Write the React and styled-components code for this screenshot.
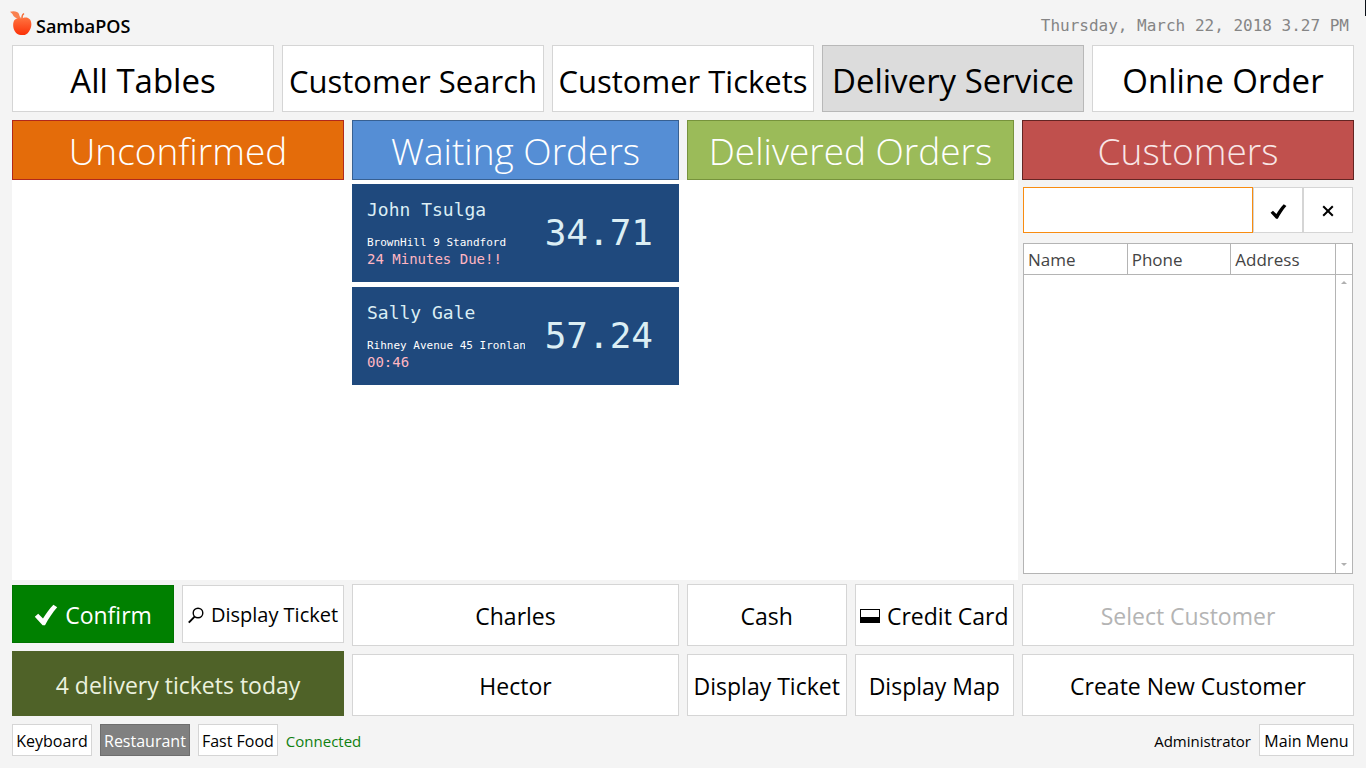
import React from "react";
import styled, { createGlobalStyle } from "styled-components";

const UI = `"Open Sans", "Noto Sans", sans-serif`;
const MONO = `"DejaVu Sans Mono", "Liberation Mono", monospace`;
const COLUMNS = "minmax(0, 332fr) minmax(0, 327fr) minmax(0, 327fr) minmax(0, 332fr)";

const GlobalStyle = createGlobalStyle`
  *, *::before, *::after { box-sizing: border-box; }
  body { margin: 0; background: #f4f4f4; color: #000; font-family: ${UI}; }
  button, input { font: inherit; color: inherit; margin: 0; border-radius: 0; }
`;

const Page = styled.div`
  min-height: 100vh;
  display: flex;
  flex-direction: column;
  padding: 0 12px 12px;
  position: relative;
`;

const WindowEdge = styled.span`
  position: absolute;
  top: 0;
  right: 0;
  width: 1px;
  height: 16px;
  background: #0b1118;
`;

const TopBar = styled.header`
  display: flex;
  align-items: center;
  justify-content: space-between;
  height: 45px;
  padding: 6px 5px 0 0;
`;

const Brand = styled.div`
  display: flex;
  align-items: center;
  gap: 4px;
  margin-left: -2px;
  font-size: 18px;
  font-weight: 600;
  line-height: 24px;
  svg { margin-top: -4px; }
`;

const Clock = styled.time`
  font: 16px/24px ${MONO};
  color: #858585;
`;

const Button = styled.button`
  display: flex;
  align-items: center;
  justify-content: center;
  gap: 7px;
  min-width: 0;
  padding: 2px 0 0;
  border: 1px solid ${(p) => p.$border || "#d5d5d5"};
  background: ${(p) => p.$bg || "#fff"};
  color: ${(p) => p.$color || "#000"};
  font-size: ${(p) => p.$size || 23}px;
  line-height: 32px;
  white-space: nowrap;
`;

const Tabs = styled.nav`
  display: grid;
  grid-template-columns: repeat(5, minmax(0, 1fr));
  gap: 8px;
`;

const Tab = styled(Button)`
  height: 67px;
  padding-top: 4px;
`;

const Headings = styled.div`
  display: grid;
  grid-template-columns: ${COLUMNS};
  gap: 8px;
  margin-top: 8px;
`;

const Heading = styled.h2`
  margin: 0;
  height: 60px;
  border: 1px solid ${(p) => p.$border};
  background: ${(p) => p.$bg};
  color: ${(p) => p.$color || "#fff"};
  font-size: 37px;
  font-weight: 300;
  line-height: 60px;
  text-align: center;
  white-space: nowrap;
`;

const Workspace = styled.main`
  flex: 1;
  display: grid;
  grid-template-columns: ${COLUMNS};
  column-gap: 8px;
`;

const Board = styled.section`
  grid-column: 1 / 4;
  display: grid;
  grid-template-columns: subgrid;
  margin: 0 -4px 4px 0;
  padding-right: 4px;
  background: #fff;
`;

const Lane = styled.div`
  display: flex;
  flex-direction: column;
  gap: 5px;
  padding-top: 4px;
`;

const Ticket = styled.article`
  display: grid;
  grid-template-columns: minmax(0, 1fr) auto;
  align-items: center;
  column-gap: 20px;
  height: 98px;
  padding: 0 26px 0 15px;
  background: #1f497d;
  color: #dbeef4;
  font-family: ${MONO};
`;

const TicketInfo = styled.div`
  min-width: 0;
  display: flex;
  flex-direction: column;
`;

const Customer = styled.span`
  margin-bottom: 14px;
  font-size: 18px;
  line-height: 22px;
`;

const Address = styled.span`
  overflow: hidden;
  white-space: nowrap;
  color: #fff;
  font-size: 11px;
  line-height: 16px;
`;

const Due = styled.span`
  color: #ffb6c1;
  font-size: 14px;
  line-height: 16px;
`;

const Amount = styled.span`
  font-size: 36px;
  line-height: 44px;
`;

const CustomerPanel = styled.section`
  display: flex;
  flex-direction: column;
  gap: 10px;
  padding: 7px 1px 10px;
`;

const SearchRow = styled.form`
  display: flex;
  height: 46px;
`;

const SearchInput = styled.input`
  flex: 1;
  min-width: 0;
  padding: 0 8px;
  border: 1px solid #f88c10;
  background: #fff;
  font-size: 23px;
  outline: none;
`;

const SearchButton = styled(Button)`
  width: 50px;
`;

const ListBox = styled.div`
  flex: 1;
  display: grid;
  grid-template-columns: minmax(0, 1fr) 17px;
  border: 1px solid #b4b4b4;
  background: #fff;
`;

const CustomerTable = styled.table`
  width: 100%;
  align-self: start;
  border-collapse: separate;
  border-spacing: 0;
  table-layout: fixed;
  th {
    height: 31px;
    padding: 2px 4px 0;
    border-right: 1px solid #b4b4b4;
    border-bottom: 1px solid #b4b4b4;
    color: #444;
    font-size: 17px;
    font-weight: 400;
    line-height: 24px;
    text-align: left;
  }
  th:last-child { border-right: 0; }
`;

const ScrollBar = styled.div`
  display: flex;
  flex-direction: column;
  justify-content: space-between;
  align-items: center;
  padding-bottom: 6px;
  border-left: 1px solid #b4b4b4;
`;

const ScrollHead = styled.div`
  display: flex;
  flex-direction: column;
  align-items: center;
  align-self: stretch;
  gap: 6px;
  &::before {
    content: "";
    align-self: stretch;
    height: 31px;
    border-bottom: 1px solid #b4b4b4;
  }
`;

const Actions = styled.section`
  display: grid;
  grid-template-columns: ${COLUMNS};
  column-gap: 8px;
`;

const ActionGroup = styled.div`
  display: grid;
  grid-template-columns: repeat(${(p) => p.$cols || 1}, minmax(0, 1fr));
  grid-template-rows: 62px 62px;
  gap: 8px;
`;

const TicketActions = styled(ActionGroup)`
  grid-template-rows: 58px 65px;
  padding-top: 1px;
`;

const Summary = styled(Button)`
  grid-column: 1 / -1;
`;

const StatusBar = styled.footer`
  display: flex;
  align-items: center;
  gap: 8px;
  height: 32px;
  margin-top: 8px;
`;

const SmallButton = styled(Button)`
  height: 32px;
  min-width: 80px;
  padding: 2px 3px 0;
`;

const MenuButton = styled(SmallButton)`
  min-width: 95px;
`;

const Status = styled.span`
  padding-top: 2px;
  color: ${(p) => p.$color || "#000"};
  font-size: 15px;
  line-height: 24px;
  margin-left: ${(p) => (p.$right ? "auto" : 0)};
`;

const Logo = () => (
  <svg width="22" height="25" viewBox="0 0 22 25" aria-hidden="true">
    <defs>
      <linearGradient id="apple" x1="0" y1="0" x2="0" y2="1">
        <stop offset="0" stopColor="#ff7440" />
        <stop offset="1" stopColor="#fb3108" />
      </linearGradient>
    </defs>
    <path d="M0 .8C3 -.2 8 0 9 3C9.300 5 10 6 11.500 7.500C7 7.800 3.500 6.500 2.500 3Z" fill="#f9804f" />
    <path d="M12 8C11.800 6 12.500 3.500 14 2.500" fill="none" stroke="#f5703c" strokeWidth="1.500" />
    <path d="M12 7.500C14 6 18 5.800 20 8.500C22.300 12 21.500 17 19 20.500C17 23.500 14.500 24.500 12 24C9 24.500 6.500 23 5 20.500C2.800 17 2.500 12 4.500 9C6.500 6.500 10 6.500 12 7.500Z" fill="url(#apple)" />
  </svg>
);

const Check = ({ size = 24 }) => (
  <svg width={size} height={size} viewBox="0 0 24 24" aria-hidden="true">
    <path d="M.8 13.800L4.200 10.800L9 15.600C12 10.600 15.200 6.200 19.400 1.800L23.200 4.200C18.600 9.400 14.600 15.400 11 22.200H8.600Z" fill="currentColor" />
  </svg>
);

const Cross = () => (
  <svg width="12" height="12" viewBox="0 0 12 12" aria-hidden="true">
    <path d="M1.200 1.200L10.800 10.800M10.800 1.200L1.200 10.800" stroke="currentColor" strokeWidth="2" />
  </svg>
);

const Magnifier = () => (
  <svg width="16" height="17" viewBox="0 0 16 17" fill="none" stroke="currentColor" aria-hidden="true">
    <circle cx="10" cy="6" r="4.800" strokeWidth="1.400" />
    <path d="M6.600 9.600L.8 15.600" strokeWidth="2" />
  </svg>
);

const Card = () => (
  <svg width="20" height="14" viewBox="0 0 20 14" aria-hidden="true">
    <rect x=".5" y=".5" width="19" height="13" fill="#fff" stroke="#000" />
    <rect y="8" width="20" height="6" />
  </svg>
);

const Arrow = ({ down }) => (
  <svg width="6" height="4" viewBox="0 0 6 4" aria-hidden="true">
    <path d={down ? "M0 0H6L3 3Z" : "M0 3H6L3 0Z"} fill="#b0b0b0" />
  </svg>
);

const tabs = [
  { label: "All Tables", size: 33 },
  { label: "Customer Search", size: 31 },
  { label: "Customer Tickets", size: 31 },
  { label: "Delivery Service", size: 33, active: true },
  { label: "Online Order", size: 33 },
];

const headings = [
  { label: "Unconfirmed", bg: "#e46c0a", border: "#b0281c" },
  { label: "Waiting Orders", bg: "#558ed5", border: "#376092" },
  { label: "Delivered Orders", bg: "#9bbb59", border: "#77933c" },
  { label: "Customers", bg: "#c0504d", border: "#632523", color: "#f8e6e6" },
];

const tickets = [
  { name: "John Tsulga", address: "BrownHill 9 Standford", due: "24 Minutes Due!!", amount: "34.71" },
  { name: "Sally Gale", address: "Rihney Avenue 45 Ironlan", due: "00:46", amount: "57.24" },
];

export default function App() {
  return (
    <Page>
      <GlobalStyle />
      <WindowEdge />
      <TopBar>
        <Brand><Logo />SambaPOS</Brand>
        <Clock>Thursday, March 22, 2018 3.27 PM</Clock>
      </TopBar>
      <Tabs>
        {tabs.map((t) => (
          <Tab key={t.label} type="button" $size={t.size} $bg={t.active && "#dcdcdc"} $border={t.active && "#b8b8b8"}>
            {t.label}
          </Tab>
        ))}
      </Tabs>
      <Headings>
        {headings.map((h) => (
          <Heading key={h.label} $bg={h.bg} $border={h.border} $color={h.color}>{h.label}</Heading>
        ))}
      </Headings>
      <Workspace>
        <Board>
          <Lane />
          <Lane>
            {tickets.map((t) => (
              <Ticket key={t.name}>
                <TicketInfo>
                  <Customer>{t.name}</Customer>
                  <Address>{t.address}</Address>
                  <Due>{t.due}</Due>
                </TicketInfo>
                <Amount>{t.amount}</Amount>
              </Ticket>
            ))}
          </Lane>
          <Lane />
        </Board>
        <CustomerPanel>
          <SearchRow onSubmit={(e) => e.preventDefault()}>
            <SearchInput type="text" aria-label="Search customers" />
            <SearchButton type="submit" aria-label="Search"><Check size={17} /></SearchButton>
            <SearchButton type="reset" aria-label="Clear"><Cross /></SearchButton>
          </SearchRow>
          <ListBox>
            <CustomerTable>
              <thead>
                <tr>
                  <th scope="col">Name</th>
                  <th scope="col">Phone</th>
                  <th scope="col">Address</th>
                </tr>
              </thead>
            </CustomerTable>
            <ScrollBar>
              <ScrollHead><Arrow /></ScrollHead>
              <Arrow down />
            </ScrollBar>
          </ListBox>
        </CustomerPanel>
      </Workspace>
      <Actions>
        <TicketActions $cols={2}>
          <Button type="button" $bg="#008000" $border="#007400" $color="#fff"><Check />Confirm</Button>
          <Button type="button" $size={20}><Magnifier />Display Ticket</Button>
          <Summary type="button" $bg="#4f6228" $border="#4f6228" $color="#ebf1de">4 delivery tickets today</Summary>
        </TicketActions>
        <ActionGroup>
          <Button type="button">Charles</Button>
          <Button type="button">Hector</Button>
        </ActionGroup>
        <ActionGroup $cols={2}>
          <Button type="button">Cash</Button>
          <Button type="button"><Card />Credit Card</Button>
          <Button type="button">Display Ticket</Button>
          <Button type="button">Display Map</Button>
        </ActionGroup>
        <ActionGroup>
          <Button type="button" disabled $color="#b4b4b4">Select Customer</Button>
          <Button type="button">Create New Customer</Button>
        </ActionGroup>
      </Actions>
      <StatusBar>
        <SmallButton type="button" $size={16}>Keyboard</SmallButton>
        <SmallButton type="button" $size={16} $bg="#808080" $border="#6e6e6e" $color="#fff">Restaurant</SmallButton>
        <SmallButton type="button" $size={16}>Fast Food</SmallButton>
        <Status $color="#108010">Connected</Status>
        <Status $right>Administrator</Status>
        <MenuButton type="button" $size={16}>Main Menu</MenuButton>
      </StatusBar>
    </Page>
  );
}
